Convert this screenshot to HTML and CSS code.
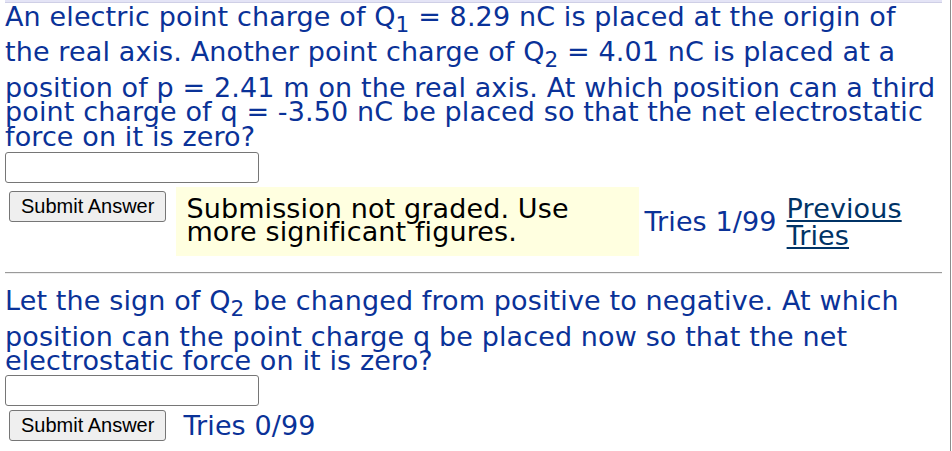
FILE: index.html
```html
<!DOCTYPE html>
<html>
<head>
<meta charset="utf-8">
<link rel="stylesheet" href="styles.css">
</head>
<body>
<div class="page">
  <div class="topbar"></div>
  <p class="question">An electric point charge of Q<sub>1</sub> = 8.29 nC is placed at the origin of the real axis. Another point charge of Q<sub>2</sub> = 4.01 nC is placed at a position of p = 2.41 m on the real axis. At which position can a third point charge of q = -3.50 nC be placed so that the net electrostatic force on it is zero?</p>
  <input class="answer" type="text">
  <div class="row row-graded">
    <button class="submit submit-top">Submit Answer</button>
    <div class="message">Submission not graded. Use more significant figures.</div>
    <span class="tries">Tries 1/99</span>
    <a class="prev" href="#">Previous Tries</a>
  </div>
  <hr class="sep">
  <p class="question">Let the sign of Q<sub>2</sub> be changed from positive to negative. At which position can the point charge q be placed now so that the net electrostatic force on it is zero?</p>
  <input class="answer answer-second" type="text">
  <div class="row row-open">
    <button class="submit">Submit Answer</button>
    <span class="tries tries-open">Tries 0/99</span>
  </div>
</div>
</body>
</html>
```

FILE: styles.css
```css
html, body {
  margin: 0;
  padding: 0;
  background: #ffffff;
}
.page {
  width: 937px;
  height: 451px;
  padding: 0 8px 0 5px;
  border-right: 1px solid #8c8c8c;
  font-family: "DejaVu Sans", Verdana, sans-serif;
  font-size: 27px;
  letter-spacing: 0.12px;
  color: #0a3298;
  overflow: hidden;
}
.topbar {
  height: 2px;
  background: #e4e4f6;
  border-bottom: 1px solid #cfcfe6;
}
.question {
  margin: 0;
  padding-top: 2px;
  line-height: 24.5px;
}
.question sub {
  font-size: 0.8em;
  vertical-align: sub;
  line-height: 30px;
}
.answer {
  display: block;
  box-sizing: border-box;
  width: 254px;
  height: 31px;
  margin: 3px 0 0 0;
  border: 1px solid #767676;
  border-radius: 3px;
  background: #fff;
  padding: 0 4px;
}
.answer-second {
  margin-top: 1px;
}
.row {
  display: flex;
  align-items: center;
}
.row-graded {
  margin-top: 4px;
}
.submit {
  font-family: "Liberation Sans", Arial, sans-serif;
  font-size: 20px;
  line-height: 23px;
  letter-spacing: normal;
  color: #000;
  background: #efefef;
  border: 1px solid #767676;
  border-radius: 3px;
  padding: 3px 11px;
  margin-left: 4px;
  flex: none;
}
.submit-top {
  align-self: flex-start;
  margin-top: 4px;
}
.message {
  width: 444px;
  margin-left: 10px;
  padding: 10px 9px 13px 10px;
  background: #ffffe0;
  color: #000;
  line-height: 23px;
}
.tries {
  margin-left: 5px;
  white-space: nowrap;
}
.prev {
  margin-left: 10px;
  width: 130px;
  line-height: 27px;
  color: #003366;
}
.sep {
  margin: 16px 0 13px 0;
  border: 0;
  border-top: 1px solid #9a9a9a;
  border-bottom: 1px solid #eeeeee;
  height: 0;
}
.row-open {
  margin-top: 4px;
}
.tries-open {
  margin-left: 17px;
}
```
